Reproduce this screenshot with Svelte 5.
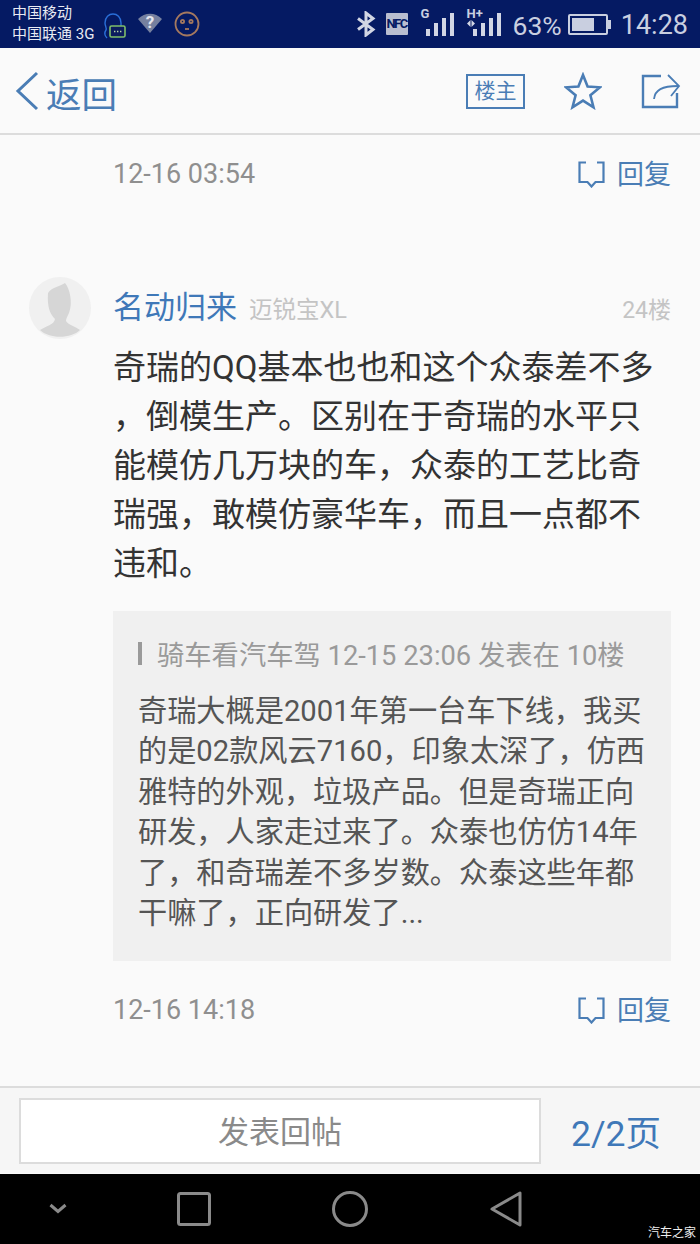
<script>
  const lines = ['奇瑞的QQ基本也也和这个众泰差不多', '，倒模生产。区别在于奇瑞的水平只', '能模仿几万块的车，众泰的工艺比奇', '瑞强，敢模仿豪华车，而且一点都不', '违和。'];
  const quoteLines = ['奇瑞大概是2001年第一台车下线，我买', '的是02款风云7160，印象太深了，仿西', '雅特的外观，垃圾产品。但是奇瑞正向', '研发，人家走过来了。众泰也仿仿14年', '了，和奇瑞差不多岁数。众泰这些年都', '干嘛了，正向研发了...'];
</script>

{#snippet replyLink()}
  <span class="reply">
    <svg width="27" height="27" viewBox="0 0 27 27" fill="none" stroke="#4a7db5" stroke-width="2.2">
      <path d="M8 1.5H1.5V21H9.5L13.5 25.5L17.5 21H25.5V1.5H19" />
    </svg>
    回复
  </span>
{/snippet}

<div class="screen">
  <div class="status">
    <div class="carriers">
      <span>中国移动</span>
      <span>中国联通 3G</span>
    </div>
    <svg class="st-qq" width="26" height="28" viewBox="0 0 26 28" fill="none">
      <path d="M6 26C3 23 3 21 5 18C6 16 4 14 4 11C4 5 8 2 12 2C16 2 20 5 20 11V14" stroke="#2a6fd8" stroke-width="1.4" />
      <rect x="9" y="14" width="15" height="11" rx="1.5" fill="#0b1c5e" stroke="#7fbf6a" stroke-width="1.6" />
      <path d="M13 19.5h1.4M16 19.5h1.4M19 19.5h1.4" stroke="#b8d8a8" stroke-width="1.4" />
    </svg>
    <svg class="st-wifi" width="26" height="22" viewBox="0 0 26 22">
      <path d="M1 7C8 0 18 0 25 7L13 21Z" fill="#76809f" />
      <text x="13" y="16" text-anchor="middle" class="wifi-q">?</text>
    </svg>
    <svg class="st-face" width="26" height="26" viewBox="0 0 26 26" fill="none" stroke="#a5795f" stroke-width="1.8">
      <circle cx="13" cy="13" r="11.5" />
      <circle cx="8.5" cy="10.5" r="1.6" />
      <circle cx="17" cy="10.5" r="1.6" />
      <path d="M11 18h4" />
    </svg>
    <div class="grow"></div>
    <svg width="20" height="26" viewBox="0 0 20 26" fill="none" stroke="#d2d6e4" stroke-width="3">
      <path d="M2 7.5L17 18.5L10 24V2L17 7.5L2 18.5" />
    </svg>
    <span class="nfc">NFC</span>
    <div class="signal">
      <span class="net">G</span>
      <svg width="34" height="28" viewBox="0 0 34 28" fill="#d2d6e4">
        <rect x="3" y="21" width="4" height="7" />
        <rect x="11" y="15" width="4" height="13" />
        <rect x="19" y="10" width="4" height="18" />
        <rect x="27" y="5" width="4" height="23" />
      </svg>
    </div>
    <div class="signal two">
      <span class="net">H+</span>
      <svg width="36" height="28" viewBox="0 0 36 28" fill="#d2d6e4">
        <path d="M1 15.5l3.5-3.5v7zM5.5 12l3.5 3.5-3.5 3.5z" />
        <rect x="7" y="21" width="4" height="7" />
        <rect x="15" y="15" width="4" height="13" />
        <rect x="23" y="10" width="4" height="18" />
        <rect x="31" y="5" width="4" height="23" />
      </svg>
    </div>
    <span class="pct">63%</span>
    <div class="battery"><div class="level"></div></div>
    <span class="clock">14:28</span>
  </div>

  <header class="topbar">
    <div class="back">
      <svg width="24" height="40" viewBox="0 0 24 40" fill="none" stroke="#4a7db5" stroke-width="3">
        <path d="M22 2L3 20L22 38" />
      </svg>
      <span>返回</span>
    </div>
    <div class="grow"></div>
    <span class="owner">楼主</span>
    <svg class="star" width="38" height="38" viewBox="0 0 38 38" fill="none" stroke="#4a7db5" stroke-width="2.6" stroke-linejoin="miter">
      <path d="M19 3L23.6 14.5L36 15.3L26.4 23.2L29.5 35.3L19 28.6L8.5 35.3L11.6 23.2L2 15.3L14.4 14.5Z" />
    </svg>
    <svg width="40" height="36" viewBox="0 0 40 36" fill="none" stroke="#4a7db5" stroke-width="2.4">
      <path d="M20 3H2V34H36V20" />
      <path d="M13 26C14 17 21 13 37 13" stroke-width="1.8" />
      <path d="M27 2L38 13L30 23" stroke-width="1.8" />
    </svg>
  </header>

  <main class="content">
    <div class="meta first">
      <span class="time">12-16 03:54</span>
      {@render replyLink()}
    </div>

    <article class="post">
      <div class="avatar">
        <svg width="62" height="62" viewBox="0 0 62 62">
          <circle cx="31" cy="31" r="31" fill="#f0f0f0" />
          <path d="M11 53C17 49 25 48 26 42C21 37 18 30 19 16C23 10 32 9 36 6C41 12 44 26 40 36C38 40 37 42 37 44C39 48 46 49 51 53C42 62 20 62 11 53Z" fill="#d6d6d6" />
        </svg>
      </div>
      <div class="body">
        <div class="author">
          <span class="name">名动归来</span>
          <span class="car">迈锐宝XL</span>
          <span class="floor">24楼</span>
        </div>
        <div class="text">
          {#each lines as line}
            <div>{line}</div>
          {/each}
        </div>
        <blockquote class="quote">
          <div class="quote-head"><i></i>骑车看汽车驾 12-15 23:06 发表在 10楼</div>
          {#each quoteLines as line}
            <div class="quote-line">{line}</div>
          {/each}
        </blockquote>
        <div class="meta">
          <span class="time">12-16 14:18</span>
          {@render replyLink()}
        </div>
      </div>
    </article>
  </main>

  <footer class="composer">
    <div class="input">发表回帖</div>
    <span class="pages">2/2页</span>
  </footer>

  <nav class="navbar">
    <svg width="20" height="14" viewBox="0 0 20 14" fill="none" stroke="#8a8a8a" stroke-width="3">
      <path d="M2.5 3L10 9.5L17.5 3" />
    </svg>
    <svg width="34" height="34" viewBox="0 0 34 34" fill="none" stroke="#8a8a8a" stroke-width="3">
      <rect x="1.5" y="1.5" width="31" height="31" rx="2" />
    </svg>
    <svg width="36" height="36" viewBox="0 0 36 36" fill="none" stroke="#8a8a8a" stroke-width="3">
      <circle cx="18" cy="18" r="16.5" />
    </svg>
    <svg width="32" height="36" viewBox="0 0 32 36" fill="none" stroke="#8a8a8a" stroke-width="3" stroke-linejoin="round">
      <path d="M30 2V34L2 18Z" />
    </svg>
    <span class="mark">汽车之家</span>
  </nav>
</div>

<style>
  :global(body) {
    margin: 0;
    background: #fafafa;
  }

  .screen {
    width: 700px;
    height: 1244px;
    display: flex;
    flex-direction: column;
    overflow: hidden;
    background: #fafafa;
    font-family: Roboto, 'Noto Sans CJK SC', sans-serif;
  }

  .grow {
    flex: 1;
  }

  .status {
    height: 48px;
    flex: none;
    display: flex;
    align-items: center;
    padding: 0 12px;
    background: #051a63;
    color: #c9cfe0;
  }

  .carriers {
    display: flex;
    flex-direction: column;
    margin-top: -1px;
    font-size: 15px;
    line-height: 20.5px;
    color: #e8eaf2;
    white-space: nowrap;
  }

  .st-qq {
    margin-left: 7px;
    margin-top: 4px;
  }

  .st-wifi {
    margin-left: 10px;
    margin-top: -2px;
  }

  .wifi-q {
    font-size: 17px;
    font-weight: 700;
    fill: #e4e6ee;
  }

  .st-face {
    margin-left: 11px;
  }

  .nfc {
    margin-left: 10px;
    width: 22px;
    height: 22px;
    background: #b9bed0;
    color: #051a63;
    font-size: 13px;
    font-weight: 700;
    line-height: 22px;
    text-align: center;
    letter-spacing: -1.6px;
    border-radius: 1px;
  }

  .signal {
    position: relative;
    margin-left: 15px;
    margin-top: -4px;
  }

  .signal svg {
    display: block;
  }

  .signal.two {
    margin-left: 9px;
  }

  .net {
    position: absolute;
    left: -2px;
    top: 0;
    font-size: 13px;
    font-weight: 700;
    line-height: 12px;
  }

  .signal.two .net {
    left: 1px;
  }

  .pct {
    margin-left: 11px;
    margin-top: 2px;
    font-size: 26.5px;
  }

  .battery {
    box-sizing: border-box;
    margin-left: 6px;
    width: 40px;
    height: 21px;
    border: 2px solid #c9cfe0;
    border-radius: 2px;
    padding: 2px;
    position: relative;
  }

  .battery::after {
    content: '';
    position: absolute;
    right: -5px;
    top: 4px;
    width: 3px;
    height: 9px;
    background: #c9cfe0;
  }

  .level {
    width: 70%;
    height: 100%;
    background: #c9cfe0;
  }

  .clock {
    margin-left: 13px;
    margin-top: 2px;
    font-size: 27px;
  }

  .topbar {
    height: 86px;
    flex: none;
    margin-top: 1px;
    display: flex;
    align-items: center;
    padding: 0 19px 0 15px;
    border-bottom: 2px solid #dcdcdc;
    color: #4a7db5;
    box-sizing: border-box;
  }

  .back {
    display: flex;
    align-items: center;
    gap: 7px;
    font-size: 35.5px;
  }

  .back span {
    margin-top: 2px;
  }

  .owner {
    box-sizing: border-box;
    width: 59px;
    height: 35px;
    border: 2px solid #4a7db5;
    font-size: 21px;
    line-height: 30px;
    text-align: center;
  }

  .star {
    margin-left: 39px;
  }

  .topbar > svg:last-child {
    margin-left: 39px;
  }

  .content {
    flex: 1;
    min-height: 0;
    padding-right: 29px;
  }

  .meta {
    display: flex;
    align-items: center;
    justify-content: space-between;
    height: 40px;
  }

  .meta.first {
    margin-top: 19px;
    margin-left: 113px;
  }

  .time {
    font-size: 27px;
    color: #8f8f8f;
  }

  .reply {
    display: flex;
    align-items: center;
    gap: 12px;
    margin-top: -4px;
    font-size: 27px;
    color: #4a7db5;
  }

  .reply svg {
    margin-top: 4px;
  }

  .post {
    display: flex;
    margin-top: 83px;
    padding-left: 29px;
  }

  .avatar {
    flex: none;
    width: 62px;
    height: 62px;
    margin-right: 22px;
  }

  .avatar svg {
    display: block;
  }

  .body {
    flex: 1;
    min-width: 0;
  }

  .author {
    display: flex;
    align-items: baseline;
    height: 62px;
    line-height: 62px;
  }

  .name {
    font-size: 31px;
    color: #3f78b8;
  }

  .car {
    margin-left: 12px;
    font-size: 23.5px;
    color: #c4c4c4;
  }

  .floor {
    margin-left: auto;
    font-size: 23px;
    color: #c4c4c4;
  }

  .text {
    margin-top: 4px;
    font-size: 33px;
    line-height: 49px;
    color: #333;
    white-space: nowrap;
  }

  .quote {
    margin: 23px 0 0;
    height: 350px;
    box-sizing: border-box;
    padding: 21px 0 0 25px;
    background: #f0f0f0;
  }

  .quote-head {
    display: flex;
    align-items: center;
    height: 42px;
    margin-bottom: 17px;
    font-size: 27.3px;
    color: #9a9a9a;
    white-space: nowrap;
  }

  .quote-head i {
    width: 4px;
    height: 23px;
    margin-right: 15px;
    background: #9a9a9a;
  }

  .quote-line {
    font-size: 29.2px;
    line-height: 40.4px;
    color: #555;
    white-space: nowrap;
  }

  .body > .meta {
    margin-top: 29px;
  }

  .composer {
    height: 87px;
    flex: none;
    box-sizing: border-box;
    display: flex;
    align-items: center;
    padding: 0 39px 0 19px;
    border-top: 2px solid #dcdcdc;
    background: #f6f6f6;
  }

  .input {
    box-sizing: border-box;
    width: 522px;
    height: 66px;
    margin-top: 1px;
    border: 2px solid #dcdcdc;
    background: #fff;
    font-size: 31px;
    line-height: 65px;
    text-align: center;
    color: #8a8a8a;
  }

  .pages {
    margin-left: auto;
    font-size: 35.5px;
    color: #3f78b8;
  }

  .navbar {
    position: relative;
    height: 70px;
    flex: none;
    margin-top: 1px;
    background: #000;
    display: grid;
    grid-template-columns: 116px 156px 156px 156px;
    justify-items: center;
    align-items: center;
  }

  .mark {
    position: absolute;
    right: 4px;
    bottom: 2px;
    font-size: 12px;
    line-height: 17px;
    color: #f0f0f0;
  }
</style>
